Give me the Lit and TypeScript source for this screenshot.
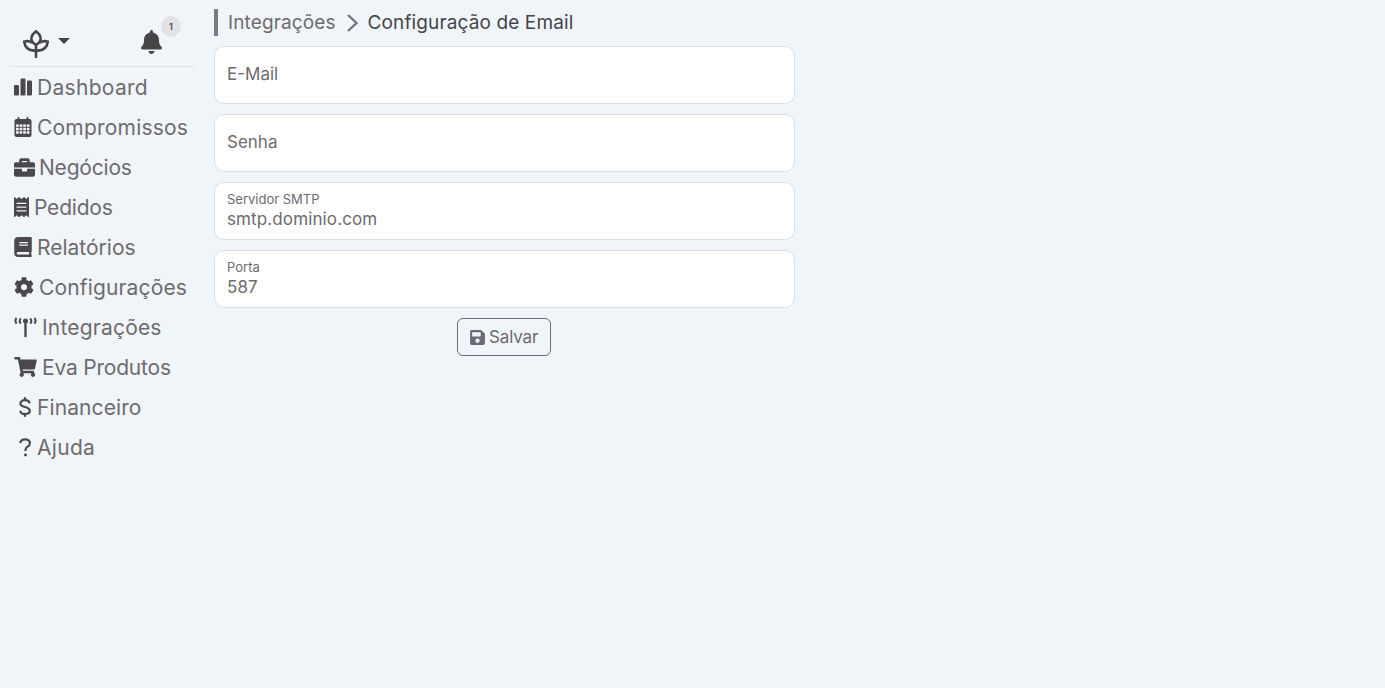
import { LitElement, html, css, svg } from 'lit';
import { customElement } from 'lit/decorators.js';

const P = {
  bell: ['0 0 448 512', 'M224 512c35.32 0 63.97-28.65 63.97-64H160.03c0 35.35 28.65 64 63.97 64zm215.39-149.71c-19.32-20.76-55.47-51.99-55.47-154.29 0-77.7-54.48-139.9-127.94-155.16V32c0-17.67-14.32-32-31.98-32s-31.98 14.33-31.98 32v20.84C118.56 68.1 64.08 130.3 64.08 208c0 102.3-36.15 133.53-55.47 154.29-6 6.45-8.66 14.16-8.61 21.71.11 16.4 12.98 32 32.1 32h383.8c19.12 0 32-15.6 32.1-32 .05-7.55-2.61-15.27-8.61-21.71z'],
  briefcase: ['0 0 512 512', 'M320 336c0 8.84-7.16 16-16 16h-96c-8.84 0-16-7.16-16-16v-48H0v144c0 25.6 22.4 48 48 48h416c25.6 0 48-22.4 48-48V288H320v48zm144-208h-80V80c0-25.6-22.4-48-48-48H176c-25.6 0-48 22.4-48 48v48H48c-25.6 0-48 22.4-48 48v80h512v-80c0-25.6-22.4-48-48-48zm-144 0H192V96h128v32z'],
  receipt: ['0 0 384 512', 'M358.4 3.2L320 48 265.6 3.2a15.9 15.9 0 0 0-19.2 0L192 48 137.6 3.2a15.9 15.9 0 0 0-19.2 0L64 48 25.6 3.2C15-4.7 0 2.8 0 16v480c0 13.2 15 20.7 25.6 12.8L64 464l54.4 44.8a15.9 15.9 0 0 0 19.2 0L192 464l54.4 44.8a15.9 15.9 0 0 0 19.2 0L320 464l38.4 44.8c10.5 7.9 25.6.4 25.6-12.8V16c0-13.2-15-20.7-25.6-12.8zM320 360c0 4.4-3.6 8-8 8H72c-4.4 0-8-3.6-8-8v-16c0-4.4 3.6-8 8-8h240c4.4 0 8 3.6 8 8v16zm0-96c0 4.4-3.6 8-8 8H72c-4.4 0-8-3.6-8-8v-16c0-4.4 3.6-8 8-8h240c4.4 0 8 3.6 8 8v16zm0-96c0 4.4-3.6 8-8 8H72c-4.4 0-8-3.6-8-8v-16c0-4.4 3.6-8 8-8h240c4.4 0 8 3.6 8 8v16z'],
  book: ['0 0 448 512', 'M448 360V24c0-13.3-10.7-24-24-24H96C43 0 0 43 0 96v320c0 53 43 96 96 96h328c13.3 0 24-10.7 24-24v-16c0-7.5-3.5-14.3-8.9-18.7-4.2-15.4-4.2-59.3 0-74.7 5.4-4.3 8.9-11.1 8.9-18.6zM128 134c0-3.3 2.7-6 6-6h212c3.3 0 6 2.7 6 6v20c0 3.3-2.7 6-6 6H134c-3.3 0-6-2.7-6-6v-20zm0 64c0-3.3 2.7-6 6-6h212c3.3 0 6 2.7 6 6v20c0 3.3-2.7 6-6 6H134c-3.3 0-6-2.7-6-6v-20zm253.4 250H96c-17.7 0-32-14.3-32-32 0-17.6 14.4-32 32-32h285.4c-1.9 17.1-1.9 46.9 0 64z'],
  cog: ['0 0 512 512', 'M487.4 315.7l-42.6-24.6c4.3-23.2 4.3-47 0-70.2l42.6-24.6c4.9-2.8 7.1-8.6 5.5-14-11.1-35.6-30-67.8-54.7-94.6-3.8-4.1-10-5.1-14.8-2.3L380.8 110c-17.9-15.4-38.5-27.3-60.8-35.1V25.8c0-5.6-3.9-10.5-9.4-11.7-36.7-8.2-74.3-7.8-109.2 0-5.5 1.2-9.4 6.1-9.4 11.7V75c-22.2 7.9-42.8 19.8-60.8 35.1L88.7 85.5c-4.9-2.8-11-1.9-14.8 2.3-24.7 26.7-43.6 58.9-54.7 94.6-1.7 5.4.6 11.2 5.5 14L67.3 221c-4.3 23.2-4.3 47 0 70.2l-42.6 24.6c-4.9 2.8-7.1 8.6-5.5 14 11.1 35.6 30 67.8 54.7 94.6 3.8 4.1 10 5.1 14.8 2.3l42.6-24.6c17.9 15.4 38.5 27.3 60.8 35.1v49.2c0 5.6 3.9 10.5 9.4 11.7 36.7 8.2 74.3 7.8 109.2 0 5.5-1.2 9.4-6.1 9.4-11.7v-49.2c22.2-7.9 42.8-19.8 60.8-35.1l42.6 24.6c4.9 2.8 11 1.9 14.8-2.3 24.7-26.7 43.6-58.9 54.7-94.6 1.5-5.5-.7-11.3-5.6-14.1zM256 336c-44.1 0-80-35.9-80-80s35.9-80 80-80 80 35.9 80 80-35.9 80-80 80z'],
  cart: ['0 0 576 512', 'M528.12 301.319l47.273-208C578.806 78.301 567.391 64 551.99 64H159.208l-9.166-44.81C147.758 8.021 137.93 0 126.529 0H24C10.745 0 0 10.745 0 24v16c0 13.255 10.745 24 24 24h69.883l70.248 343.435C147.325 417.1 136 435.222 136 456c0 30.928 25.072 56 56 56s56-25.072 56-56c0-15.674-6.447-29.835-16.824-40h209.647C430.447 426.165 424 440.326 424 456c0 30.928 25.072 56 56 56s56-25.072 56-56c0-22.172-12.888-41.332-31.579-50.405l5.517-24.276c3.413-15.018-8.002-29.319-23.403-29.319H218.117l-6.545-32h293.145c11.206 0 20.92-7.754 23.403-18.681z'],
  save: ['0 0 448 512', 'M433.941 129.941l-83.882-83.882A48 48 0 0 0 316.118 32H48C21.49 32 0 53.49 0 80v352c0 26.51 21.49 48 48 48h352c26.51 0 48-21.49 48-48V163.882a48 48 0 0 0-14.059-33.941zM224 416c-35.346 0-64-28.654-64-64 0-35.346 28.654-64 64-64s64 28.654 64 64c0 35.346-28.654 64-64 64zm96-304.52V212c0 6.627-5.373 12-12 12H76c-6.627 0-12-5.373-12-12V108c0-6.627 5.373-12 12-12h228.52c3.183 0 6.235 1.264 8.485 3.515l3.48 3.48A11.996 11.996 0 0 1 320 111.48z'],
} as const;

const icon = (name: keyof typeof P, w: number, h: number) => html`<svg
  width=${w}
  height=${h}
  viewBox=${P[name][0]}
  fill="currentColor"
  aria-hidden="true"
><path d=${P[name][1]} /></svg>`;

const barsIcon = html`<svg width="18" height="18" viewBox="0 0 18 18" fill="currentColor" aria-hidden="true">
  <rect x="0" y="7" width="5" height="10.500" rx="1.300" />
  <rect x="6.500" y="0.500" width="5" height="17" rx="1.300" />
  <rect x="13" y="2.500" width="5" height="15" rx="1.300" />
</svg>`;

const calendarCells = [0, 1, 2, 3].flatMap((c) =>
  [0, 1, 2].map((r) => svg`<rect x=${2 + c * 3.6} y=${7.4 + r * 3.4} width="2.7" height="2.5" fill="#f0f5fa" />`),
);
const calendarIcon = html`<svg width="18" height="20" viewBox="0 0 18 20" fill="currentColor" aria-hidden="true">
  <rect x="0.500" y="2" width="17" height="18" rx="2" />
  <rect x="3.500" y="0" width="2" height="4" rx="1" />
  <rect x="12.500" y="0" width="2" height="4" rx="1" />
  ${calendarCells}
</svg>`;

const towerIcon = html`<svg width="23" height="20" viewBox="0 0 23 20" fill="none" stroke="currentColor" aria-hidden="true">
  <circle cx="11.500" cy="4" r="2.500" fill="currentColor" stroke="none" />
  <path d="M11.500 4v16" stroke-width="2.400" />
  <path d="M6.800 1.400c-1.500 1.700-1.500 3.500 0 5.200M16.200 1.400c1.500 1.700 1.500 3.500 0 5.200M2.600 1c-1.600 1.900-1.600 3.800 0 5.700M20.400 1c1.600 1.900 1.600 3.800 0 5.700" stroke-width="2" />
</svg>`;

const dollarIcon = html`<svg width="12" height="20" viewBox="0 0 12 20" fill="none" stroke="currentColor" stroke-width="2.200" aria-hidden="true">
  <path d="M10.600 6.300C10.300 4.400 8.600 3.200 6 3.200 3.300 3.200 1.400 4.500 1.400 6.500c0 2 1.600 2.800 4.600 3.500s4.800 1.700 4.800 3.800c0 2-2 3.200-4.800 3.200-2.600 0-4.500-1.200-4.800-3.200" />
  <path d="M6 .3V3.200M6 17v2.700" />
</svg>`;

const questionIcon = html`<svg width="13" height="19" viewBox="0 0 14 20" fill="none" stroke="currentColor" aria-hidden="true">
  <path d="M1.400 5.300C1.600 2.800 3.600 1.200 6.600 1.200c3 0 5.200 1.700 5.200 4.200 0 2-1.200 3-2.800 4-1.400.9-2 1.600-2 3.400v1" stroke-width="2.300" />
  <circle cx="7" cy="18" r="1.600" fill="currentColor" stroke="none" />
</svg>`;

// track nudges each label to the width it has in the reference font
const menu = [
  { label: 'Dashboard', icon: barsIcon, slot: 18, gap: 5, left: 0, track: 0.3 },
  { label: 'Compromissos', icon: calendarIcon, slot: 18, gap: 5, left: 0, track: 0.2 },
  { label: 'Negócios', icon: icon('briefcase', 21, 21), slot: 21, gap: 4, left: 0, track: -0.2 },
  { label: 'Pedidos', icon: icon('receipt', 15, 20), slot: 15, gap: 5, left: 0, track: -0.2 },
  { label: 'Relatórios', icon: icon('book', 18, 20), slot: 18, gap: 5, left: 0, track: 0 },
  { label: 'Configurações', icon: icon('cog', 20, 20), slot: 20, gap: 5, left: 0, track: 0.15 },
  { label: 'Integrações', icon: towerIcon, slot: 23, gap: 5, left: 0, track: 0.2 },
  { label: 'Eva Produtos', icon: icon('cart', 23, 20), slot: 23, gap: 5, left: 0, track: -0.2 },
  { label: 'Financeiro', icon: dollarIcon, slot: 12, gap: 6, left: 5, track: 0.1 },
  { label: 'Ajuda', icon: questionIcon, slot: 13, gap: 5, left: 5, track: 0.3 },
];

const fields = [
  { label: 'E-Mail', value: '' },
  { label: 'Senha', value: '' },
  { label: 'Servidor SMTP', value: 'smtp.dominio.com' },
  { label: 'Porta', value: '587' },
];

@customElement('app-root')
export class AppRoot extends LitElement {
  static styles = css`
    :host {
      display: block;
      min-height: 688px;
      background: #f0f5fa;
      font-family: Inter, 'Open Sans', sans-serif;
      color: #6e6a6e;
    }
    .page {
      display: flex;
      align-items: flex-start;
    }
    .side {
      width: 185px;
      margin-left: 10px;
      flex: none;
    }
    .brand {
      display: flex;
      align-items: flex-start;
      justify-content: space-between;
      height: 67px;
      border-bottom: 1px solid #e1e3e8;
      box-sizing: border-box;
      padding: 30px 13px 0 12px;
      color: #474548;
    }
    .logo {
      display: flex;
      align-items: flex-start;
      gap: 8px;
    }
    .caret {
      width: 0;
      height: 0;
      margin-top: 8px;
      border: 6px solid transparent;
      border-top-color: #474548;
      border-bottom: 0;
    }
    .bell {
      position: relative;
      margin-right: 20px;
      display: flex;
    }
    .badge {
      position: absolute;
      left: 20px;
      top: -14px;
      width: 20px;
      height: 21px;
      border-radius: 50%;
      background: #e3e3e6;
      font-size: 9px;
      font-weight: 600;
      line-height: 21px;
      text-align: center;
      color: #474548;
    }
    .nav {
      display: flex;
      flex-direction: column;
      padding-left: 4px;
    }
    .item {
      display: flex;
      align-items: center;
      height: 40px;
      font-size: 21px;
      white-space: nowrap;
    }
    .item svg {
      display: block;
      color: #4a484b;
    }
    .ic {
      display: flex;
      justify-content: center;
      flex: none;
    }
    .main {
      width: 581px;
      margin-left: 19px;
      flex: none;
    }
    .crumb {
      display: flex;
      align-items: center;
      height: 27px;
      margin-top: 9px;
      border-left: 4px solid #7b7883;
      padding-left: 10px;
      font-size: 19px;
      letter-spacing: 0.12px;
      white-space: nowrap;
      box-sizing: border-box;
    }
    .crumb svg {
      margin: 0 9px 0 10px;
      color: #6f7384;
    }
    .crumb b {
      font-weight: 400;
      color: #45444a;
    }
    .form {
      display: flex;
      flex-direction: column;
      gap: 10px;
      margin-top: 10px;
    }
    .field {
      display: flex;
      flex-direction: column;
      justify-content: center;
      box-sizing: border-box;
      height: 58px;
      padding: 0 12px 2px;
      background: #fff;
      border: 1px solid #d9dde4;
      border-radius: 10px;
      font-size: 17px;
      white-space: nowrap;
    }
    .field.filled {
      justify-content: flex-start;
      padding: 8px 12px 0;
    }
    .field small {
      font-size: 13px;
      line-height: 17px;
    }
    .field span {
      font-size: 17px;
      letter-spacing: 0.12px;
      line-height: 22px;
    }
    .actions {
      display: flex;
      justify-content: center;
      margin-top: 10px;
      padding-right: 1px;
    }
    .save {
      display: flex;
      align-items: center;
      gap: 4px;
      width: 94px;
      height: 38px;
      box-sizing: border-box;
      padding: 0 0 0 12px;
      background: transparent;
      border: 1px solid #6f6c75;
      border-radius: 6px;
      font: inherit;
      font-size: 17px;
      letter-spacing: -0.15px;
      color: #6e6a6e;
    }
    .save svg {
      color: #6c6a78;
    }
  `;

  render() {
    return html`<div class="page">
      <aside class="side">
        <div class="brand">
          <div class="logo">
            <svg width="28" height="28" viewBox="0 0 28 28" fill="none" stroke="currentColor" stroke-width="2.600" stroke-linecap="round" aria-hidden="true">
              <path d="M14 15C10 12.500 9 9.500 9.500 7.500 10 5 12 2.800 14 1.300c2 1.500 4 3.700 4.500 6.200.5 2-.5 5-4.500 7.500z" />
              <path d="M14 15v12M14 20.500C8 21 3 19 2.200 11.700c2.800-1 5.600-.7 7.800.8M14 20.500c6 .5 11-1.500 11.800-8.800-2.800-1-5.600-.7-7.800.8" />
            </svg>
            <span class="caret"></span>
          </div>
          <div class="bell">
            ${icon('bell', 21, 24)}
            <span class="badge">1</span>
          </div>
        </div>
        <nav class="nav">
          ${menu.map(
            (m) => html`<div class="item" style="letter-spacing:${m.track}px">
              <span class="ic" style="width:${m.slot}px;margin-left:${m.left}px;margin-right:${m.gap}px">${m.icon}</span>${m.label}
            </div>`,
          )}
        </nav>
      </aside>
      <main class="main">
        <div class="crumb">
          Integrações
          <svg width="13" height="18" viewBox="0 0 13 18" fill="none" stroke="currentColor" stroke-width="2.400" aria-hidden="true">
            <path d="M2 1l8.500 8L2 17" />
          </svg>
          <b>Configuração de Email</b>
        </div>
        <div class="form">
          ${fields.map((f) =>
            f.value
              ? html`<div class="field filled"><small>${f.label}</small><span>${f.value}</span></div>`
              : html`<div class="field">${f.label}</div>`,
          )}
        </div>
        <div class="actions">
          <button class="save">${icon('save', 15, 17)} Salvar</button>
        </div>
      </main>
    </div>`;
  }
}
